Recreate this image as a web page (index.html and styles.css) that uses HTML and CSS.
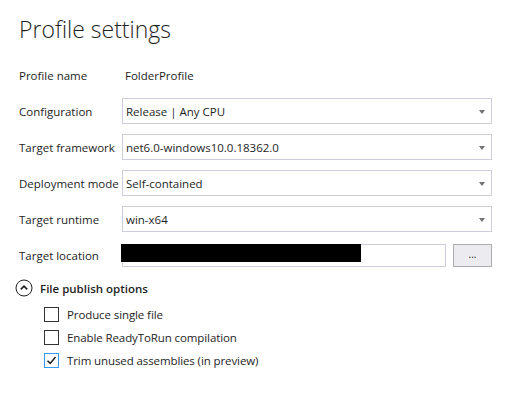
FILE: index.html
```html
<!DOCTYPE html>
<html lang="en">
  <head>
    <meta charset="UTF-8" />
    <title>Profile settings</title>
    <link rel="stylesheet" href="styles.css">
  </head>
  <body>
    <div class="page">
      <h1>Profile settings</h1>

      <div class="settings">
        <div class="row">
          <span class="label">Profile name</span>
          <span class="value">FolderProfile</span>
        </div>

        <div class="row">
          <span class="label">Configuration</span>
          <div class="combo">
            <span>Release | Any CPU</span>
            <span class="arrow"></span>
          </div>
        </div>

        <div class="row">
          <span class="label">Target framework</span>
          <div class="combo">
            <span>net6.0-windows10.0.18362.0</span>
            <span class="arrow"></span>
          </div>
        </div>

        <div class="row">
          <span class="label">Deployment mode</span>
          <div class="combo">
            <span>Self-contained</span>
            <span class="arrow"></span>
          </div>
        </div>

        <div class="row">
          <span class="label">Target runtime</span>
          <div class="combo">
            <span>win-x64</span>
            <span class="arrow"></span>
          </div>
        </div>

        <div class="row">
          <span class="label">Target location</span>
          <div class="location">
            <div class="textbox">
              <span class="redacted"></span>
            </div>
            <button class="browse">...</button>
          </div>
        </div>
      </div>

      <div class="expander">
        <span class="chevron">
          <svg width="18" height="18" viewBox="0 0 18 18">
            <circle cx="9" cy="9" r="8" fill="none" stroke="#1e1e1e" stroke-width="1" />
            <path d="M5.8 10.4 L9 7.2 L12.2 10.4" fill="none" stroke="#1e1e1e" stroke-width="1.6" />
          </svg>
        </span>
        <span class="expander-title">File publish options</span>
      </div>

      <div class="options">
        <label class="check">
          <span class="box"></span>
          Produce single file
        </label>
        <label class="check">
          <span class="box"></span>
          Enable ReadyToRun compilation
        </label>
        <label class="check">
          <span class="box checked">
            <svg width="11" height="11" viewBox="0 0 11 11">
              <path d="M1.5 5.8 L4.2 8.4 L9.5 2" fill="none" stroke="#1e1e1e" stroke-width="1.5" />
            </svg>
          </span>
          Trim unused assemblies (in preview)
        </label>
      </div>
    </div>
  </body>
</html>
```

FILE: styles.css
```css
* {
  margin: 0;
  padding: 0;
  box-sizing: border-box;
}

body {
  font-family: "Open Sans", "Noto Sans", sans-serif;
  font-size: 11.5px;
  color: #1e1e1e;
  background: #ffffff;
}

.page {
  width: 521px;
  height: 395px;
  padding: 13px 29px 0 19px;
}

h1 {
  font-size: 23px;
  font-weight: 300;
  line-height: 32px;
  color: #1e1e1e;
  margin-bottom: 17px;
}

.settings {
  display: flex;
  flex-direction: column;
  gap: 10px;
}

.row {
  display: flex;
  align-items: center;
  height: 26px;
}

.label {
  width: 103px;
  flex-shrink: 0;
}

.value {
  padding-left: 3px;
}

.combo {
  flex: 1;
  height: 26px;
  border: 1px solid #cccedb;
  display: flex;
  align-items: center;
  justify-content: space-between;
  padding: 0 6px 0 3px;
}

.arrow {
  width: 0;
  height: 0;
  border-left: 3.5px solid transparent;
  border-right: 3.5px solid transparent;
  border-top: 4px solid #717171;
  margin-top: 1px;
}

.location {
  flex: 1;
  display: flex;
  gap: 7px;
  align-items: center;
}

.textbox {
  flex: 1;
  height: 23px;
  border: 1px solid #cccedb;
  position: relative;
}

.redacted {
  position: absolute;
  left: -2px;
  top: -1px;
  width: 240px;
  height: 18px;
  background: #000000;
}

.browse {
  width: 39px;
  height: 23px;
  border: 1px solid #acacac;
  background: #ececf0;
  font-family: inherit;
  font-size: 10px;
  color: #1e1e1e;
  padding-bottom: 3px;
}

.expander {
  display: flex;
  align-items: center;
  gap: 7px;
  margin: 11px 0 0 -4px;
  height: 18px;
}

.chevron {
  display: flex;
}

.expander-title {
  font-weight: 600;
}

.options {
  display: flex;
  flex-direction: column;
  gap: 7px;
  margin: 9px 0 0 25px;
}

.check {
  display: flex;
  align-items: center;
  gap: 8px;
  height: 16px;
  letter-spacing: -0.1px;
}

.box {
  width: 15px;
  height: 15px;
  border: 1px solid #333337;
  display: flex;
  align-items: center;
  justify-content: center;
}

.box.checked {
  border-color: #3399ff;
}
```
